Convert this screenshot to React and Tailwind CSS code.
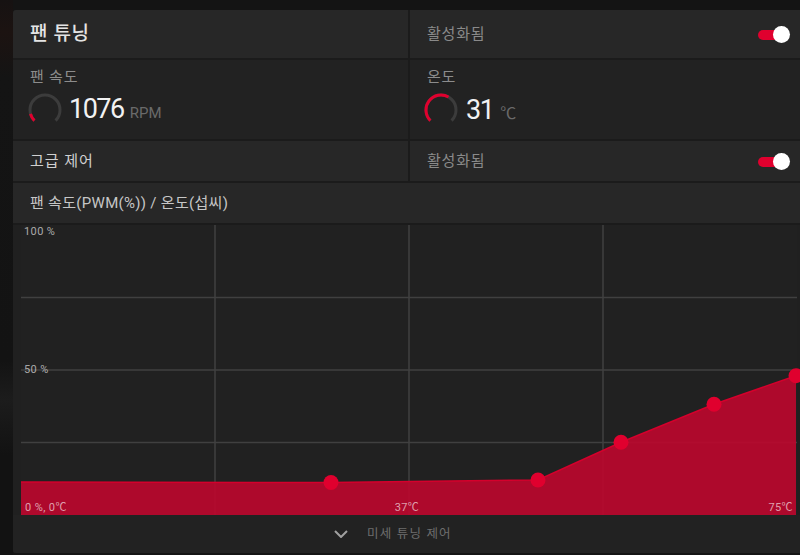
import React from 'react'

// ── gauge arcs: 270° sweep, open at the bottom ──
const ARC_BG = 'M6.39 27.61 A15 15 0 1 1 27.61 27.61'

function Gauge({ arc }) {
  return (
    <svg width="34" height="34" viewBox="0 0 34 34" className="shrink-0">
      <path d={ARC_BG} fill="none" stroke="#3c3c3c" strokeWidth="3" />
      <path d={arc} fill="none" stroke="#e0002e" strokeWidth="3" />
    </svg>
  )
}

function Toggle() {
  return (
    <div className="relative w-[32px] h-[17px]">
      <div className="absolute left-0 top-[4px] w-[28px] h-[10px] rounded-full bg-[#e0002e]" />
      <div className="absolute right-0 top-0 w-[17px] h-[17px] rounded-full bg-white" />
    </div>
  )
}

const POINTS = [
  [310, 257.5],
  [517, 255],
  [600, 217.3],
  [693, 179.3],
  [775, 150.7],
]

function FanChart() {
  const top = [[0, 257], ...POINTS]
  const line = top.map((p) => p.join(',')).join(' ')
  const area = `${line} 775,290 0,290`
  return (
    <svg width="776" height="290" viewBox="0 0 776 290" className="block overflow-visible bg-[#212121]">
      {[194, 388, 582].map((x) => (
        <line key={x} x1={x} y1="0" x2={x} y2="290" stroke="#404040" strokeWidth="1.5" />
      ))}
      {[72.5, 145, 217.5].map((y) => (
        <line key={y} x1="0" y1={y} x2="776" y2={y} stroke="#404040" strokeWidth="1.5" />
      ))}
      <polygon points={area} fill="rgba(190,7,45,0.9)" />
      <polyline points={line} fill="none" stroke="#d4002c" strokeWidth="1.5" />
      {POINTS.map(([x, y]) => (
        <circle key={x} cx={x} cy={y} r="7.5" fill="#e0002e" />
      ))}
      <g fill="rgba(255,255,255,0.62)" fontSize="11" letterSpacing="0.4">
        <text x="3" y="10">100 %</text>
        <text x="3" y="148">50 %</text>
        <text x="4" y="286">0 %, 0℃</text>
        <text x="386" y="286" textAnchor="middle">37℃</text>
        <text x="772" y="286" textAnchor="end">75℃</text>
      </g>
    </svg>
  )
}

export default function App() {
  return (
    <div className="w-[800px] h-[555px] overflow-hidden flex bg-[#141414] font-[Roboto,'Noto_Sans_CJK_KR',sans-serif]">
      <div className="w-[13px] shrink-0 bg-[linear-gradient(to_bottom,#161212,#1c1311_6%,#141414_14%,#131313_65%,#1c1c1c_72%,#121212_82%)]" />

      <div className="w-[787px] shrink-0 mt-[10px] h-[543px] flex flex-col gap-[2px] bg-[#1b1b1b] rounded-tl-[3px] rounded-bl-[3px] overflow-hidden">
        {/* header */}
        <div className="grid grid-cols-[395px_1fr] gap-[2px] h-[48px]">
          <div className="bg-[#272727] flex items-center pl-[17px] text-[19px] tracking-[0.6px] font-medium text-[#e4e4e4]">팬 튜닝</div>
          <div className="bg-[#272727] flex items-center justify-between pl-[17px] pr-[10px]">
            <span className="text-[15px] tracking-[0.8px] text-[#8a8a8a]">활성화됨</span>
            <Toggle />
          </div>
        </div>

        {/* readings */}
        <div className="grid grid-cols-[395px_1fr] gap-[2px] h-[79px]">
          <div className="bg-[#222222] pl-[17px] pt-[7px]">
            <div className="text-[15px] leading-[20px] tracking-[0.8px] text-[#8c8c8c]">팬 속도</div>
            <div className="flex items-center mt-[6px] -ml-[2px]">
              <Gauge arc="M6.39 27.61 A15 15 0 0 1 2.51 20.88" />
              <div className="flex items-baseline ml-[7px]">
                <span className="text-[27px] leading-none tracking-[-1.5px] text-[#f2f2f2]">1076</span>
                <span className="ml-[6px] text-[15px] text-[#6a6a6a]">RPM</span>
              </div>
            </div>
          </div>
          <div className="bg-[#222222] pl-[17px] pt-[7px]">
            <div className="text-[15px] leading-[20px] tracking-[0.8px] text-[#8c8c8c]">온도</div>
            <div className="flex items-center mt-[6px] -ml-[3px]">
              <Gauge arc="M6.39 27.61 A15 15 0 0 1 24.5 4.01" />
              <div className="flex items-baseline ml-[8px]">
                <span className="text-[27px] leading-none tracking-[-1.5px] text-[#f2f2f2]">31</span>
                <span className="ml-[7px] text-[16px] text-[#6a6a6a] font-['Noto_Sans_CJK_KR',sans-serif]">℃</span>
              </div>
            </div>
          </div>
        </div>

        {/* advanced control */}
        <div className="grid grid-cols-[395px_1fr] gap-[2px] h-[40px]">
          <div className="bg-[#272727] flex items-center pl-[17px] text-[15px] tracking-[1px] text-[#d0d0d0]">고급 제어</div>
          <div className="bg-[#272727] flex items-center justify-between pl-[17px] pr-[10px]">
            <span className="text-[15px] tracking-[0.8px] text-[#8a8a8a]">활성화됨</span>
            <Toggle />
          </div>
        </div>

        <div className="h-[40px] bg-[#272727] flex items-center pl-[17px] text-[15px] tracking-[0.3px] text-[#c6c6c6]">
          팬 속도(PWM(%)) / 온도(섭씨)
        </div>

        {/* curve */}
        <div className="flex-1 bg-[#202020] flex flex-col">
          <div className="pl-[8px]">
            <FanChart />
          </div>
          <div className="flex-1 bg-[#222222] flex items-center pl-[321px] gap-[19px]">
            <svg width="14" height="8" viewBox="0 0 14 8">
              <polyline points="1,1 7,7 13,1" fill="none" stroke="#a0a0a0" strokeWidth="2" />
            </svg>
            <span className="text-[12.5px] text-[#6e6e6e] tracking-[1.2px]">미세 튜닝 제어</span>
          </div>
        </div>
      </div>
    </div>
  )
}
